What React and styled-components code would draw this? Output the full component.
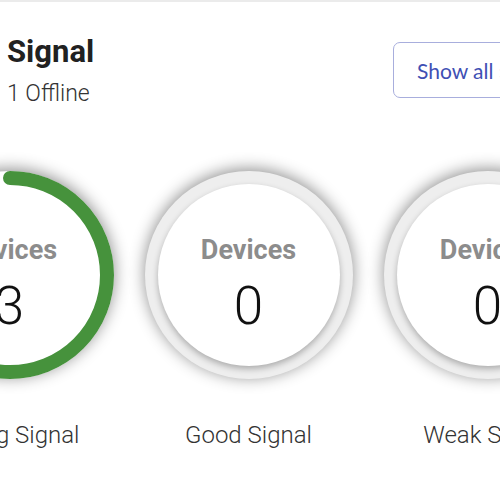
import React from 'react';
import styled, { createGlobalStyle } from 'styled-components';

const GlobalStyle = createGlobalStyle`
  html, body {
    margin: 0;
    padding: 0;
    background: #ffffff;
  }
  body {
    font-family: Roboto, "Liberation Sans", sans-serif;
  }
`;

// Visible window of the card
const Viewport = styled.div`
  width: 500px;
  height: 500px;
  overflow: hidden;
  border-top: 2px solid #ebebeb;
  box-sizing: border-box;
  background: #ffffff;
`;

// Header with title and button
const Header = styled.div`
  width: 563px;
  display: flex;
  justify-content: space-between;
  align-items: flex-start;
  padding: 30px 0 0 7px;
  box-sizing: border-box;
`;

const TitleBlock = styled.div`
  display: flex;
  flex-direction: column;
`;

const Title = styled.h2`
  margin: 0;
  font-size: 31px;
  font-weight: 700;
  color: #212121;
  line-height: 40px;
`;

const SubTitle = styled.div`
  font-size: 23px;
  font-weight: 300;
  color: #333333;
  line-height: 30px;
  margin-top: 7px;
`;

const ShowAllButton = styled.button`
  margin-top: 10px;
  height: 56px;
  width: 170px;
  padding: 0 0 0 23px;
  text-align: left;
  border: 1px solid #a8aedd;
  border-radius: 7px;
  background: #ffffff;
  color: #3f4fb4;
  font-family: Lato, "Liberation Sans", sans-serif;
  font-size: 21px;
  cursor: pointer;
`;

// Gauge row
const GaugeRow = styled.div`
  display: grid;
  grid-template-columns: repeat(3, 239px);
  margin-left: -110px;
  margin-top: 62px;
`;

const Gauge = styled.div`
  display: flex;
  flex-direction: column;
  align-items: center;
`;

const Ring = styled.div`
  position: relative;
  width: 208px;
  height: 208px;
  border-radius: 50%;
  background: ${({ $active }) => ($active ? '#ffffff' : '#eeeeee')};
  box-shadow: 0 -2px 16px rgba(0, 0, 0, 0.45);
  display: flex;
  align-items: center;
  justify-content: center;
`;

const Arc = styled.svg`
  position: absolute;
  inset: 0;
`;

const Face = styled.div`
  width: 182px;
  height: 182px;
  box-sizing: border-box;
  padding-top: 51px;
  border-radius: 50%;
  background: #ffffff;
  box-shadow: ${({ $active }) => ($active ? 'none' : '0 3px 6px rgba(0, 0, 0, 0.28)')};
  display: flex;
  flex-direction: column;
  align-items: center;
`;

const FaceLabel = styled.div`
  font-size: 27px;
  font-weight: 700;
  color: #8c8c8c;
  line-height: 30px;
`;

const FaceValue = styled.div`
  font-size: 53px;
  font-weight: 300;
  color: #111111;
  line-height: 62px;
  margin-top: 10px;
`;

const GaugeLabel = styled.div`
  margin-top: 42px;
  font-size: 24px;
  font-weight: 300;
  line-height: 28px;
  color: #333333;
  white-space: nowrap;
`;

const gauges = [
  { label: 'Strong Signal', value: 3, pct: 0.75, color: '#46923c' },
  { label: 'Good Signal', value: 0, pct: 0 },
  { label: 'Weak Signal', value: 0, pct: 0 },
];

const R = 97;
const C = 2 * Math.PI * R;

const SignalGauge = ({ label, value, pct, color }) => {
  const active = pct > 0;
  return (
    <Gauge>
      <Ring $active={active}>
        {active && (
          <Arc width="208" height="208" viewBox="0 0 208 208">
            <circle
              cx="104"
              cy="104"
              r={R}
              fill="none"
              stroke={color}
              strokeWidth="14"
              strokeLinecap="round"
              strokeDasharray={`${C * pct} ${C}`}
              transform="rotate(-90 104 104)"
            />
          </Arc>
        )}
        <Face $active={active}>
          <FaceLabel>Devices</FaceLabel>
          <FaceValue>{value}</FaceValue>
        </Face>
      </Ring>
      <GaugeLabel>{label}</GaugeLabel>
    </Gauge>
  );
};

const App = () => {
  return (
    <>
      <GlobalStyle />
      <Viewport>
        <Header>
          <TitleBlock>
            <Title>Signal</Title>
            <SubTitle>1 Offline</SubTitle>
          </TitleBlock>
          <ShowAllButton>Show all ›</ShowAllButton>
        </Header>
        <GaugeRow>
          {gauges.map((g) => (
            <SignalGauge key={g.label} {...g} />
          ))}
        </GaugeRow>
      </Viewport>
    </>
  );
};

export default App;
